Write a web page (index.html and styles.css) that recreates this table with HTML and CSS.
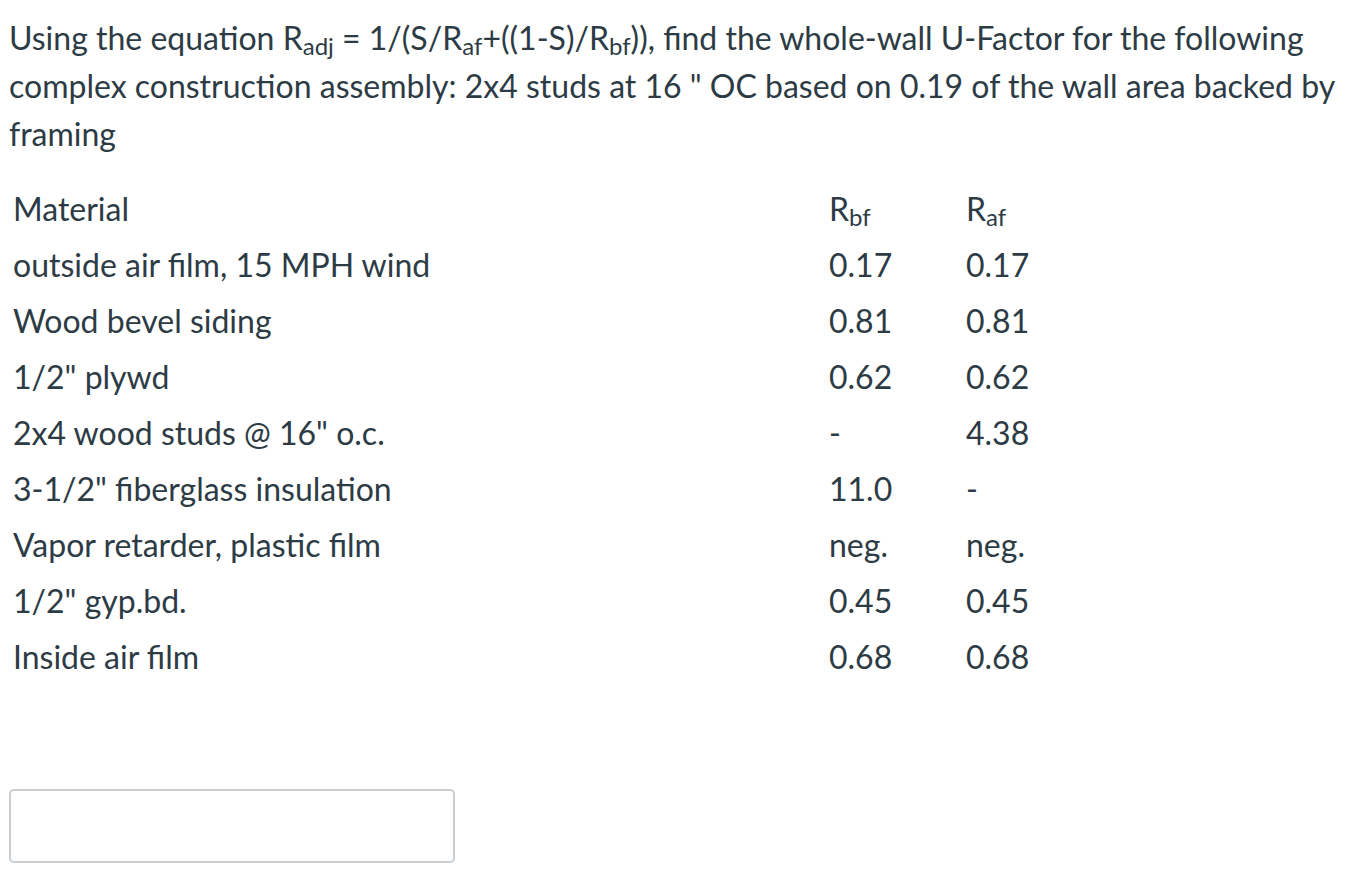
FILE: index.html
```html
<!DOCTYPE html>
<html>
<head>
<meta charset="utf-8">
<link rel="stylesheet" href="styles.css">
</head>
<body>
<div class="question">
  <p class="prompt">Using the equation R<sub>adj</sub> = 1/(S/R<sub>af</sub>+((1-S)/R<sub>bf</sub>)), find the whole-wall U-Factor for the following complex construction assembly: 2x4 studs at 16 " OC based on 0.19 of the wall area backed by framing</p>
  <table class="rtable">
    <tr><td class="mat">Material</td><td class="v">R<sub>bf</sub></td><td class="v">R<sub>af</sub></td></tr>
    <tr><td class="mat">outside air film, 15 MPH wind</td><td class="v">0.17</td><td class="v">0.17</td></tr>
    <tr><td class="mat">Wood bevel siding</td><td class="v">0.81</td><td class="v">0.81</td></tr>
    <tr><td class="mat">1/2" plywd</td><td class="v">0.62</td><td class="v">0.62</td></tr>
    <tr><td class="mat">2x4 wood studs @ 16" o.c.</td><td class="v">-</td><td class="v">4.38</td></tr>
    <tr><td class="mat">3-1/2" fiberglass insulation</td><td class="v">11.0</td><td class="v">-</td></tr>
    <tr><td class="mat">Vapor retarder, plastic film</td><td class="v">neg.</td><td class="v">neg.</td></tr>
    <tr><td class="mat">1/2" gyp.bd.</td><td class="v">0.45</td><td class="v">0.45</td></tr>
    <tr><td class="mat">Inside air film</td><td class="v">0.68</td><td class="v">0.68</td></tr>
  </table>
  <div class="answer"><input class="answer-input" type="text"></div>
</div>
</body>
</html>
```
FILE: styles.css
```css
html, body {
  margin: 0;
  padding: 0;
  background: #ffffff;
}
body {
  font-family: Lato, "Open Sans", sans-serif;
  color: #2d3b45;
  font-size: 32px;
  line-height: 1.5;
}
.question {
  padding: 14px 9px 0 9px;
}
.prompt {
  margin: 0 0 23px 0;
}
sub {
  font-size: 75%;
  line-height: 0;
  vertical-align: -0.22em;
}
.rtable {
  border-collapse: collapse;
  table-layout: fixed;
  width: 1090px;
}
.rtable td {
  padding: 4px;
  vertical-align: top;
}
.rtable td.mat {
  width: 808px;
}
.rtable td.v {
  width: 129px;
}
.answer {
  margin-top: 104px;
}
.answer-input {
  box-sizing: border-box;
  width: 446px;
  height: 74px;
  border: 2px solid #c7cdd1;
  border-radius: 5px;
  background: #fff;
  margin: 0;
  display: block;
  font-family: Lato, sans-serif;
  font-size: 28px;
}
```
